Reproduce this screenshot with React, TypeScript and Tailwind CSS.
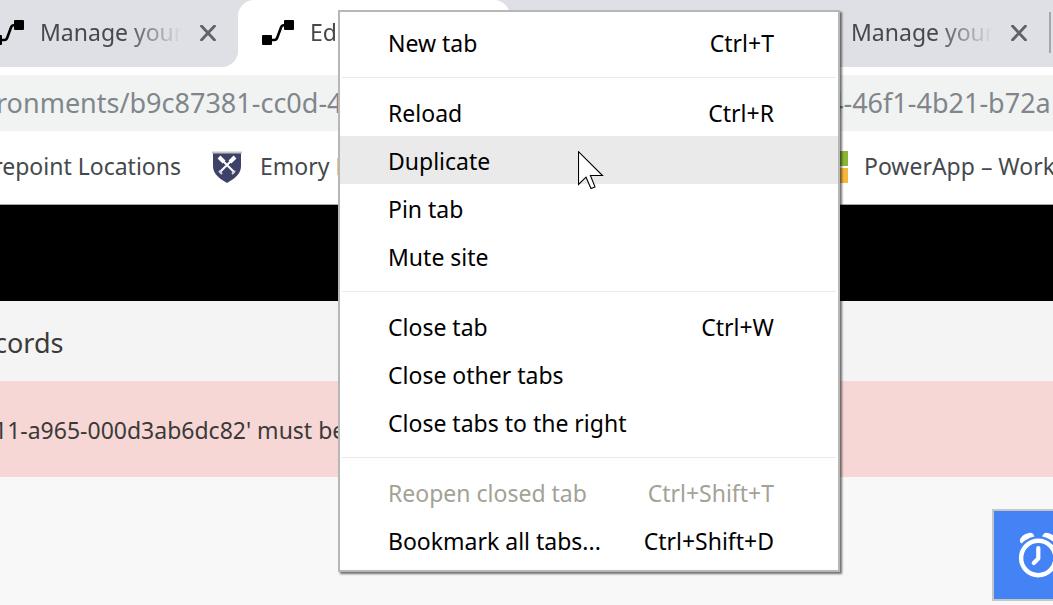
import { clsx } from "clsx";

type MenuEntry = {
  label: string;
  shortcut?: string;
  active?: boolean;
  disabled?: boolean;
};

const menuGroups: MenuEntry[][] = [
  [{ label: "New tab", shortcut: "Ctrl+T" }],
  [
    { label: "Reload", shortcut: "Ctrl+R" },
    { label: "Duplicate", active: true },
    { label: "Pin tab" },
    { label: "Mute site" },
  ],
  [
    { label: "Close tab", shortcut: "Ctrl+W" },
    { label: "Close other tabs" },
    { label: "Close tabs to the right" },
  ],
  [
    { label: "Reopen closed tab", shortcut: "Ctrl+Shift+T", disabled: true },
    { label: "Bookmark all tabs...", shortcut: "Ctrl+Shift+D" },
  ],
];

function FlowIcon() {
  return (
    <svg viewBox="0 0 32 26" className="h-[26px] w-8 shrink-0" aria-hidden="true">
      <rect x="0" y="15" width="10" height="10" rx="1" />
      <rect x="22" y="0" width="10" height="10" rx="1" />
      <path
        d="M9 20h3.500c1.500 0 2.200-.8 2.700-2.200L19 7.500c.5-1.400 1.200-2.200 2.700-2.200H23"
        fill="none"
        stroke="#000"
        strokeWidth="2.600"
      />
    </svg>
  );
}

function CloseButton() {
  return (
    <button type="button" aria-label="Close tab" className="size-4 shrink-0">
      <svg viewBox="0 0 16 16" className="size-4" aria-hidden="true">
        <path d="M1.500 1l13 14M14.500 1l-13 14" stroke="#5f6368" strokeWidth="2.800" strokeLinecap="round" />
      </svg>
    </button>
  );
}

function TabTitle({ children }: { children: string }) {
  return (
    <span className="ml-4 w-[142px] shrink-0 overflow-hidden whitespace-nowrap [mask-image:linear-gradient(to_right,#000_60%,transparent)]">
      {children}
    </span>
  );
}

function TabStrip() {
  return (
    <div className="-ml-8 flex h-[67px] text-[23px] text-[#45494d]">
      <div className="flex w-[270px] shrink-0 items-center rounded-br-2xl bg-[#dee0e5] pb-0.5 pl-6">
        <FlowIcon />
        <TabTitle>Manage your</TabTitle>
        <span className="ml-[18px] flex">
          <CloseButton />
        </span>
      </div>
      <div className="flex w-[272px] shrink-0 [background:linear-gradient(#dee0e5_30px,#fff_30px)]">
        <div className="flex flex-1 items-center rounded-t-2xl bg-white pb-0.5 pl-6">
          <FlowIcon />
          <TabTitle>Ed</TabTitle>
        </div>
      </div>
      <div className="flex grow items-center bg-[#dee0e5] pb-0.5 pl-[325px]">
        <div className="flex shrink-0 items-center border-r-2 border-[#a5a7ab] py-[3px] pr-[22px]">
          <TabTitle>Manage your</TabTitle>
          <span className="ml-[18px] flex">
            <CloseButton />
          </span>
        </div>
      </div>
    </div>
  );
}

function AddressBar() {
  const field = "h-14 shrink-0 bg-transparent pb-0.5 text-[27px] text-[#80868b] outline-none";
  return (
    <div className="mt-2 flex h-14 bg-[#f1f3f2]">
      <input
        readOnly
        aria-label="Address"
        value="ronments/b9c87381-cc0d-4"
        className={clsx(field, "-ml-1 w-[346px]")}
      />
      <input
        readOnly
        aria-label="Address, continued"
        value="4-46f1-4b21-b72a"
        className={clsx(field, "ml-[486px] w-60")}
      />
    </div>
  );
}

function ShieldIcon() {
  return (
    <svg viewBox="0 0 30 32" className="h-8 w-[30px] shrink-0" aria-hidden="true">
      <path d="M1 1h28v14c0 7-5 12-14 17C6 27 1 22 1 15z" fill="#3f4268" />
      <path d="M0 1.500h30" stroke="#c4c4c6" strokeWidth="2" />
      <path d="M8 21L20 9M22 21L10 9" stroke="#fff" strokeWidth="2" />
      <path d="M7 6l5 5M23 6l-5 5" stroke="#fff" strokeWidth="4" />
      <path d="M7 20l3 3M23 20l-3 3" stroke="#d5d5e0" strokeWidth="2" />
    </svg>
  );
}

function BookmarksBar() {
  return (
    <nav
      aria-label="Bookmarks"
      className="flex h-[74px] items-center whitespace-nowrap border-b border-[#a8a8a8] pb-0.5 text-[23px] text-[#45494d]"
    >
      <a href="#locations" className="flex w-[181px] shrink-0 justify-end">
        repoint Locations
      </a>
      <a href="#emory" className="ml-[31px] flex w-[220px] shrink-0 items-center gap-[18px]">
        <ShieldIcon />
        Emory H
      </a>
      <a href="#powerapp" className="ml-[384px] flex shrink-0 items-center gap-4">
        <svg viewBox="0 0 32 32" className="size-8" aria-hidden="true">
          <path d="M0 0h15v15H0z" fill="#f25022" />
          <path d="M17 0h15v15H17z" fill="#8ab536" />
          <path d="M0 17h15v15H0z" fill="#00a4ef" />
          <path d="M17 17h15v15H17z" fill="#f6b73f" />
        </svg>
        PowerApp – Work
      </a>
    </nav>
  );
}

function ContextMenu() {
  return (
    <div
      role="menu"
      className="absolute left-[338px] top-[10px] w-[502px] border-2 border-[#b7b7b7] bg-white py-[6px] text-[23px] text-black shadow-[2px_2px_2px_rgba(0,0,0,0.550)]"
    >
      {menuGroups.map((group, index) => (
        <div key={group[0].label} role="group">
          {index > 0 ? <hr className="mx-[2px] mb-[10px] mt-[11px] border-t border-[#e9e9e9]" /> : null}
          {group.map((entry) => (
            <button
              key={entry.label}
              type="button"
              role="menuitem"
              disabled={entry.disabled}
              className={clsx(
                "flex h-12 w-full items-center justify-between pl-12 pr-16 pt-0.5",
                entry.active && "bg-[#eaeaea]",
                entry.disabled && "text-[#a2a296]",
              )}
            >
              <span>{entry.label}</span>
              {entry.shortcut ? <span>{entry.shortcut}</span> : null}
            </button>
          ))}
        </div>
      ))}
    </div>
  );
}

function Cursor() {
  return (
    <svg
      viewBox="0 0 26 39"
      className="pointer-events-none absolute left-[578px] top-[151px] h-[39px] w-[26px]"
      aria-hidden="true"
    >
      <path
        d="M.5.700v32.800l7.500-7.300 5 11.300 4-1.600-4.600-11.400H24.500z"
        fill="#fff"
        stroke="#000"
        strokeWidth="1.100"
      />
    </svg>
  );
}

function AlarmButton() {
  return (
    <button
      type="button"
      aria-label="Alarm"
      className="absolute -right-[31px] top-[509px] flex size-[92px] items-center justify-center border-2 border-[#c6c6c6] bg-[#4483f6]"
    >
      <svg viewBox="0 0 48 48" className="size-12" fill="none" stroke="#fff" aria-hidden="true">
        <circle cx="24.300" cy="27" r="17.200" strokeWidth="4.400" />
        <path d="M24.300 17v10.500l-4.500 4.500" strokeWidth="4.200" strokeLinecap="round" strokeLinejoin="round" />
        <path
          d="M6 8.500C7.500 5 12 2 16.500 1.800c1.500 0 2.500.7 4 3.700-5.500 1.200-9.500 3.500-13 7C6 11.500 5.700 10 6 8.500zM42.600 8.500C41.100 5 36.600 2 32.100 1.800c-1.500 0-2.500.7-4 3.700 5.500 1.200 9.500 3.500 13 7 1.500-1 1.800-2.500 1.500-4z"
          fill="#fff"
          stroke="none"
        />
      </svg>
    </button>
  );
}

export default function App() {
  return (
    <div className="relative min-h-screen overflow-hidden bg-[#f8f8f8] font-['Noto_Sans',sans-serif]">
      <header className="bg-white">
        <TabStrip />
        <AddressBar />
        <BookmarksBar />
      </header>
      <main className="whitespace-nowrap text-[#3b3a39]">
        <div className="h-24 bg-black" />
        <h1 className="flex h-20 items-center bg-[#f4f4f4] pt-1 text-[27px]">
          <span className="-ml-1.5">cords</span>
        </h1>
        <p className="flex h-24 items-center bg-[#f6d7d5] pt-0.5 text-[23px]">
          <span className="-ml-1.5">11-a965-000d3ab6dc82' must be</span>
        </p>
      </main>
      <ContextMenu />
      <Cursor />
      <AlarmButton />
    </div>
  );
}
